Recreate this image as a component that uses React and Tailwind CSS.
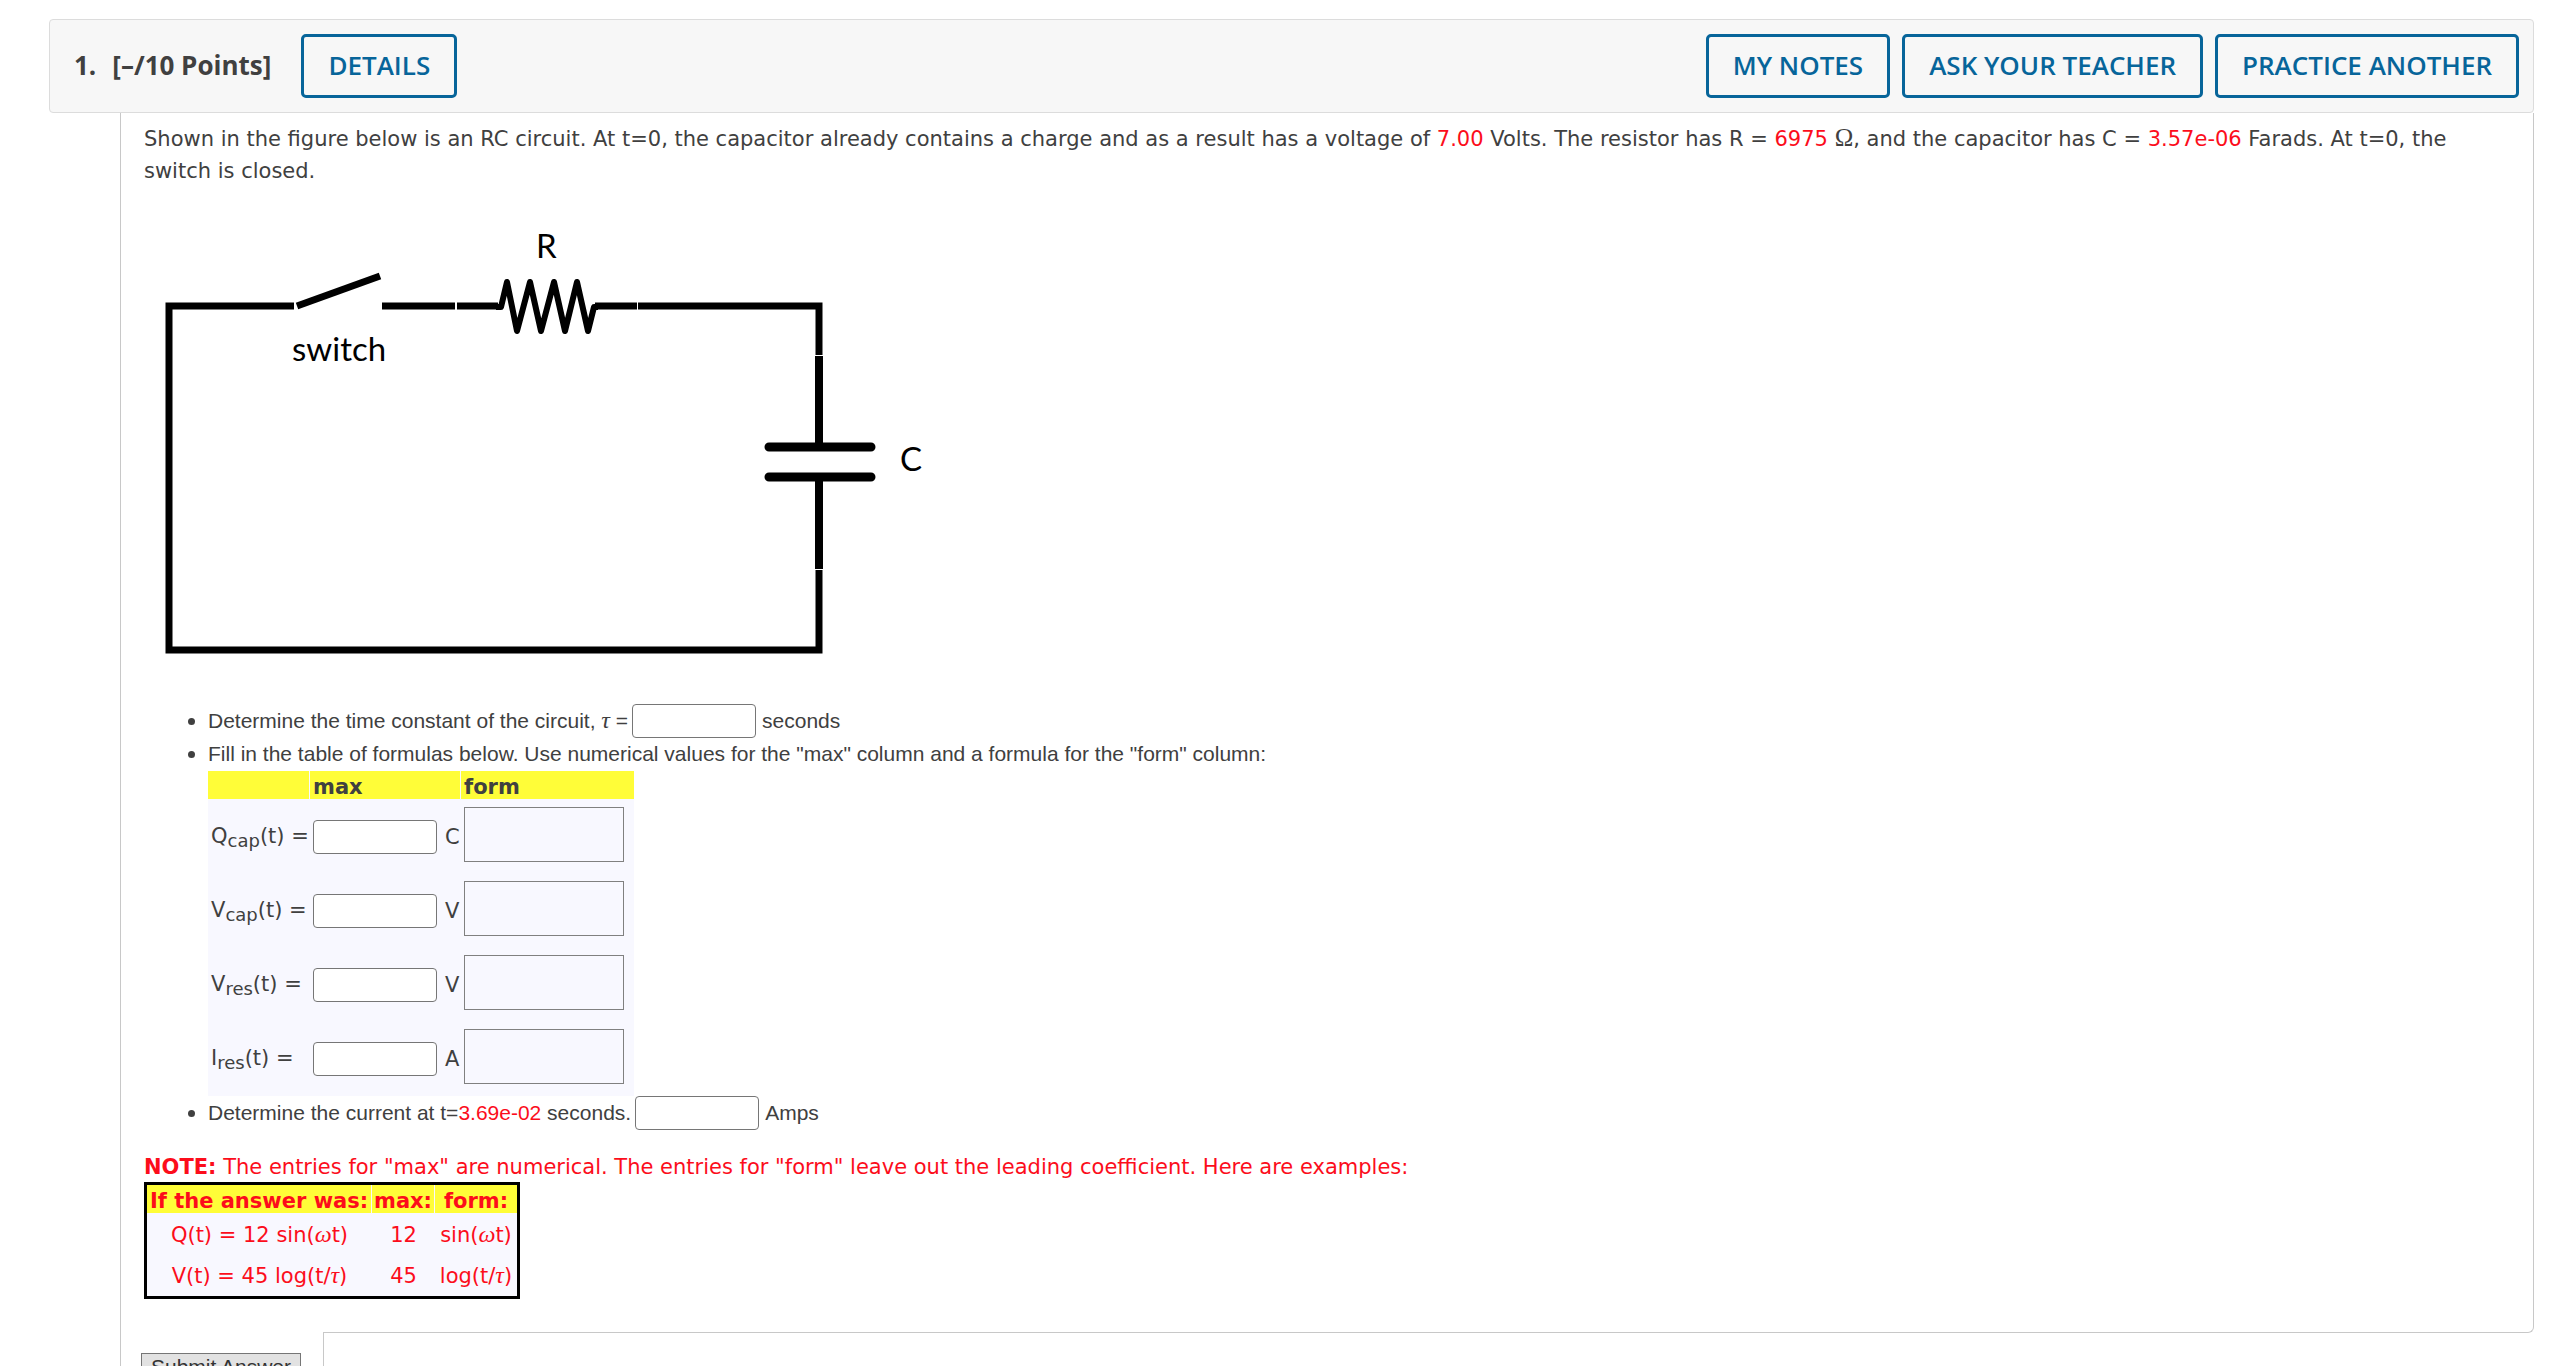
const toolButton =
  'h-[64px] cursor-pointer rounded-[5px] border-3 border-[#07659a] px-6 pb-[2px] font-["Open_Sans",sans-serif] text-[26px] font-semibold whitespace-nowrap text-[#07659a]';

const answerBox =
  "h-[34px] w-[124px] shrink-0 rounded-[4px] border border-[#767676] bg-white px-1 outline-none";

const bulletRow =
  "ml-[44px] flex items-center whitespace-nowrap before:mr-[13px] before:size-[7px] before:shrink-0 before:rounded-full before:bg-current";

const headCell = "border-b border-[#f8f8ff] bg-[#fffd38] p-0 pt-1 leading-6";

const formulas = [
  { name: "Q", sub: "cap", unit: "C" },
  { name: "V", sub: "cap", unit: "V" },
  { name: "V", sub: "res", unit: "V" },
  { name: "I", sub: "res", unit: "A" },
];

function Red({ children }) {
  return <span className="text-[#fc0d1b]">{children}</span>;
}

function Greek({ children }) {
  return (
    <i className='font-["Liberation_Serif",serif] text-[24px] leading-none italic'>{children}</i>
  );
}

function Header() {
  return (
    <header className="mr-[26px] ml-[49px] flex h-[94px] items-center rounded-[4px] border border-[#dcdcdc] bg-[#f7f7f7] pr-[14px] pl-6">
      <h1 className='flex gap-4 pb-[2px] font-["Open_Sans",sans-serif] text-[26px] font-bold whitespace-nowrap'>
        <span>1.</span>
        <span>[–/10 Points]</span>
      </h1>
      <button type="button" className={toolButton + " ml-[30px]"}>
        DETAILS
      </button>
      <div className="ml-auto flex gap-3">
        <button type="button" className={toolButton}>
          MY NOTES
        </button>
        <button type="button" className={toolButton}>
          ASK YOUR TEACHER
        </button>
        <button type="button" className={toolButton}>
          PRACTICE ANOTHER
        </button>
      </div>
    </header>
  );
}

function Circuit() {
  return (
    <svg
      viewBox="144 200 800 480"
      width="800"
      height="480"
      className="mt-[13px] mb-6 block"
      role="img"
      aria-label="RC circuit with a switch, a resistor R and a capacitor C"
      fill="none"
      stroke="#000"
      strokeWidth="7"
    >
      <path d="M294 306H169V650H819V570" />
      <path d="M297 306L380 276" />
      <path d="M382 306H455M638 306H819V355" />
      <path d="M457 306H498M595 306H637" />
      <path
        d="M496 307H501L507 282L517 331L530 282L541 331L554 282L565 331L577 282L588 331L594 307H598"
        strokeWidth="6"
        strokeLinejoin="round"
      />
      <path d="M819 356V446M819 477V569" strokeWidth="8" />
      <path d="M769 447H871M769 477H871" strokeWidth="9" strokeLinecap="round" />
      <g fill="#000" stroke="none" fontFamily="Lato, sans-serif" fontSize="33">
        <text x="536" y="258">R</text>
        <text x="292" y="361">switch</text>
        <text x="900" y="471">C</text>
      </g>
    </svg>
  );
}

function FormulaTable() {
  return (
    <table className='mt-px ml-[64px] table-fixed border-separate border-spacing-0 bg-[#f8f8ff] font-["DejaVu_Sans",sans-serif]'>
      <colgroup>
        <col className="w-[102px]" />
        <col className="w-[151px]" />
        <col className="w-[173px]" />
      </colgroup>
      <thead>
        <tr className="h-[29px] text-left">
          <th className={headCell + " border-r"} />
          <th scope="col" className={headCell + " border-r pl-[3px]"}>
            max
          </th>
          <th scope="col" className={headCell + " pl-[3px]"}>
            form
          </th>
        </tr>
      </thead>
      <tbody>
        {formulas.map(({ name, sub, unit }) => (
          <tr key={name + sub} className="h-[74px]">
            <th scope="row" className="p-0 pb-[3px] pl-[3px] text-left font-normal whitespace-nowrap">
              {name}
              <sub className="text-[18px]">{sub}</sub>(t) =
            </th>
            <td className="p-0 pb-px pl-[3px]">
              <div className="flex items-center gap-2">
                <input type="text" aria-label={`${name} ${sub} max`} className={answerBox} />
                {unit}
              </div>
            </td>
            <td className="p-0 pt-[7px] pl-[3px] align-top">
              <input
                type="text"
                aria-label={`${name} ${sub} form`}
                className="block h-[55px] w-[160px] border border-[#808080] bg-transparent px-2 outline-none"
              />
            </td>
          </tr>
        ))}
      </tbody>
    </table>
  );
}

function ExampleTable() {
  return (
    <table className="table-fixed border-separate border-spacing-0 border-3 border-black bg-[#f8f8ff] text-center whitespace-nowrap">
      <colgroup>
        <col className="w-[225px]" />
        <col className="w-[63px]" />
        <col className="w-[82px]" />
      </colgroup>
      <thead>
        <tr className="h-[29px]">
          <th scope="col" className={headCell + " border-r"}>
            If the answer was:
          </th>
          <th scope="col" className={headCell + " border-r"}>
            max:
          </th>
          <th scope="col" className={headCell}>
            form:
          </th>
        </tr>
      </thead>
      <tbody>
        <tr className="h-[41px]">
          <td className="p-0">
            Q(t) = 12 sin(<Greek>ω</Greek>t)
          </td>
          <td className="p-0">12</td>
          <td className="p-0">
            sin(<Greek>ω</Greek>t)
          </td>
        </tr>
        <tr className="h-[41px]">
          <td className="p-0">
            V(t) = 45 log(t/<Greek>τ</Greek>)
          </td>
          <td className="p-0">45</td>
          <td className="p-0">
            log(t/<Greek>τ</Greek>)
          </td>
        </tr>
      </tbody>
    </table>
  );
}

export default function App() {
  return (
    <div className='h-screen overflow-hidden bg-white pt-[19px] font-["DejaVu_Sans",sans-serif] text-[21px] leading-8 text-[#404040]'>
      <Header />
      <main className="mr-[26px] ml-[120px] border-l border-[#c8c8c8]">
        <section className="border-r border-[#c8c8c8] pt-[10px] pl-[23px]">
          <p className="pr-[60px]">
            Shown in the figure below is an RC circuit. At t=0, the capacitor already contains a
            charge and as a result has a voltage of <Red>7.00</Red> Volts. The resistor has R ={" "}
            <Red>6975</Red>{" "}
            <span className='font-["Liberation_Serif",serif] text-[25px] leading-none'>Ω</span>, and
            the capacitor has C = <Red>3.57e-06</Red> Farads. At t=0, the switch is closed.
          </p>
          <Circuit />
          <ul className='font-["Liberation_Sans",Arial,sans-serif]'>
            <li className={bulletRow + " h-[34px]"}>
              <label htmlFor="tau">
                Determine the time constant of the circuit, <Greek>τ</Greek> =
              </label>
              <input id="tau" type="text" className={answerBox + " ml-1"} />
              <span className="ml-[6px]">seconds</span>
            </li>
            <li>
              <div className={bulletRow + " h-8"}>
                Fill in the table of formulas below. Use numerical values for the "max" column and
                a formula for the "form" column:
              </div>
              <FormulaTable />
            </li>
            <li className={bulletRow + " h-[34px]"}>
              <label htmlFor="current">
                Determine the current at t=<Red>3.69e-02</Red> seconds.
              </label>
              <input id="current" type="text" className={answerBox + " ml-1"} />
              <span className="ml-[6px]">Amps</span>
            </li>
          </ul>
          <div className="mt-[22px] text-[#fc0d1b]">
            <p className="leading-[30px]">
              <b>NOTE:</b> The entries for "max" are numerical. The entries for "form" leave out
              the leading coefficient. Here are examples:
            </p>
            <ExampleTable />
          </div>
        </section>
        <div className="flex h-[34px]">
          <div className="w-[202px]" />
          <div className="flex-1 rounded-br-[6px] border-r border-b border-[#c8c8c8]" />
        </div>
        <div className="flex">
          <div className="w-[202px] pt-[18px] pl-5">
            <button
              type="submit"
              className='h-8 w-[160px] cursor-pointer border border-[#767676] bg-[#e2e2e2] pb-1 font-["Liberation_Sans",Arial,sans-serif] text-[21px] leading-6 whitespace-nowrap text-[#333]'
            >
              Submit Answer
            </button>
          </div>
          <div className="flex-1 border-l border-[#c8c8c8]" />
        </div>
      </main>
    </div>
  );
}
